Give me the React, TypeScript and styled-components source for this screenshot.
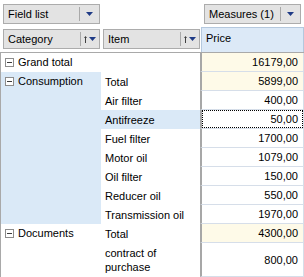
import styled, { createGlobalStyle } from "styled-components";

const GlobalStyle = createGlobalStyle`
  body {
    margin: 0;
    background: #ffffff;
    font-family: "Liberation Sans", Arial, sans-serif;
    font-size: 11px;
    color: #000000;
  }
`;

const Root = styled.div`
  width: 304px;
  height: 277px;
  overflow: hidden;
  background: #ffffff;
`;

const TopBar = styled.div`
  display: flex;
  justify-content: space-between;
  align-items: flex-start;
  height: 27px;
  padding: 4px 3px 0 3px;
  box-sizing: border-box;
`;

const HeaderRow = styled.div`
  display: grid;
  grid-template-columns: 101px 100px 103px;
  height: 25px;
`;

const HeaderSlot = styled.div<{ $left: number }>`
  padding: 2px 0 0 ${(p) => p.$left}px;
  box-sizing: border-box;
`;

const FieldButton = styled.div`
  display: flex;
  align-items: center;
  width: 97px;
  height: 20px;
  box-sizing: border-box;
  background: #e3e3e3;
  border: 1px solid #acacac;
`;

const FieldLabel = styled.span`
  flex: 1;
  padding-left: 4px;
  white-space: nowrap;
  overflow: hidden;
`;

const Divider = styled.span`
  width: 1px;
  height: 14px;
  background: #a9a9a9;
`;

const ButtonIcons = styled.span<{ $width: number }>`
  display: flex;
  align-items: center;
  justify-content: center;
  gap: 2px;
  width: ${(p) => p.$width}px;
`;

const PriceHeader = styled.div`
  height: 25px;
  box-sizing: border-box;
  background: #dce9f7;
  border: 1px solid #b4c8de;
  border-bottom: none;
  padding: 4px 0 0 4px;
`;

const Body = styled.div`
  display: grid;
  grid-template-columns: 100px 99px 104px;
  grid-template-rows: repeat(10, 19px) 34px;
  border-top: 1px solid #a9a9a9;
  border-left: 1px solid #a9a9a9;
`;

const RowHeader = styled.div<{ $row: number; $span: number; $cols: number; $blue?: boolean }>`
  grid-column: 1 / span ${(p) => p.$cols};
  grid-row: ${(p) => p.$row} / span ${(p) => p.$span};
  display: flex;
  align-items: flex-start;
  gap: 4px;
  padding: 3px 0 0 4px;
  background: ${(p) => (p.$blue ? "#dae9f7" : "#ffffff")};
  white-space: nowrap;
`;

const ItemCell = styled.div<{ $row: number; $selected?: boolean }>`
  grid-column: 2;
  grid-row: ${(p) => p.$row};
  padding: 3px 4px 0 4px;
  background: ${(p) => (p.$selected ? "#dae9f7" : "#ffffff")};
  overflow: hidden;
  line-height: 14px;
`;

const ValueCell = styled.div<{ $row: number; $total?: boolean; $selected?: boolean }>`
  position: relative;
  grid-column: 3;
  grid-row: ${(p) => p.$row};
  display: flex;
  align-items: center;
  justify-content: flex-end;
  padding-right: 5px;
  box-sizing: border-box;
  background: ${(p) => (p.$total ? "#fefae8" : "#ffffff")};
  border-left: 2px solid #a7a7a7;
  border-bottom: 1px solid #d6dee9;
  border-right: 1px solid #d6dee9;
  &::after {
    content: "";
    display: ${(p) => (p.$selected ? "block" : "none")};
    position: absolute;
    inset: 0 0 0 0;
    border: 1px dotted #000000;
  }
`;

const MinusBox = styled.span`
  display: flex;
  align-items: center;
  justify-content: center;
  width: 9px;
  height: 9px;
  margin-top: 2px;
  box-sizing: border-box;
  border: 1px solid #8c8c8c;
  background: #ffffff;
  &::before {
    content: "";
    width: 5px;
    height: 1px;
    background: #3c3c3c;
  }
`;

const DropArrow = () => (
  <svg width="7" height="4" viewBox="0 0 7 4">
    <path d="M0 0H7L3.5 4Z" fill="#1f3b86" />
  </svg>
);

const SortArrow = () => (
  <svg width="3" height="7" viewBox="0 0 3 7">
    <path d="M1.5 0L3 2H2V7H1V2H0Z" fill="#404040" />
  </svg>
);

type Row = { item: string; value: string; total?: boolean; selected?: boolean };

const consumption: Row[] = [
  { item: "Total", value: "5899,00", total: true },
  { item: "Air filter", value: "400,00" },
  { item: "Antifreeze", value: "50,00", selected: true },
  { item: "Fuel filter", value: "1700,00" },
  { item: "Motor oil", value: "1079,00" },
  { item: "Oil filter", value: "150,00" },
  { item: "Reducer oil", value: "550,00" },
  { item: "Transmission oil", value: "1970,00" },
];

const documents: Row[] = [
  { item: "Total", value: "4300,00", total: true },
  { item: "contract of purchase", value: "800,00" },
];

export default function App() {
  return (
    <Root>
      <GlobalStyle />
      <TopBar>
        <FieldButton>
          <FieldLabel>Field list</FieldLabel>
          <Divider />
          <ButtonIcons $width={19}>
            <DropArrow />
          </ButtonIcons>
        </FieldButton>
        <FieldButton>
          <FieldLabel>Measures (1)</FieldLabel>
          <Divider />
          <ButtonIcons $width={19}>
            <DropArrow />
          </ButtonIcons>
        </FieldButton>
      </TopBar>
      <HeaderRow>
        <HeaderSlot $left={3}>
          <FieldButton>
            <FieldLabel>Category</FieldLabel>
            <Divider />
            <ButtonIcons $width={18}>
              <SortArrow />
              <DropArrow />
            </ButtonIcons>
          </FieldButton>
        </HeaderSlot>
        <HeaderSlot $left={2}>
          <FieldButton>
            <FieldLabel>Item</FieldLabel>
            <Divider />
            <ButtonIcons $width={18}>
              <SortArrow />
              <DropArrow />
            </ButtonIcons>
          </FieldButton>
        </HeaderSlot>
        <PriceHeader>Price</PriceHeader>
      </HeaderRow>
      <Body>
        <RowHeader $row={1} $span={1} $cols={2}>
          <MinusBox />
          Grand total
        </RowHeader>
        <ValueCell $row={1} $total>
          16179,00
        </ValueCell>

        <RowHeader $row={2} $span={consumption.length} $cols={1} $blue>
          <MinusBox />
          Consumption
        </RowHeader>
        {consumption.map((r, i) => (
          <ItemCell key={"c-item-" + r.item} $row={i + 2} $selected={r.selected}>
            {r.item}
          </ItemCell>
        ))}
        {consumption.map((r, i) => (
          <ValueCell key={"c-val-" + r.item} $row={i + 2} $total={r.total} $selected={r.selected}>
            {r.value}
          </ValueCell>
        ))}

        <RowHeader $row={10} $span={documents.length} $cols={1}>
          <MinusBox />
          Documents
        </RowHeader>
        {documents.map((r, i) => (
          <ItemCell key={"d-item-" + r.item} $row={i + 10}>
            {r.item}
          </ItemCell>
        ))}
        {documents.map((r, i) => (
          <ValueCell key={"d-val-" + r.item} $row={i + 10} $total={r.total}>
            {r.value}
          </ValueCell>
        ))}
      </Body>
    </Root>
  );
}
